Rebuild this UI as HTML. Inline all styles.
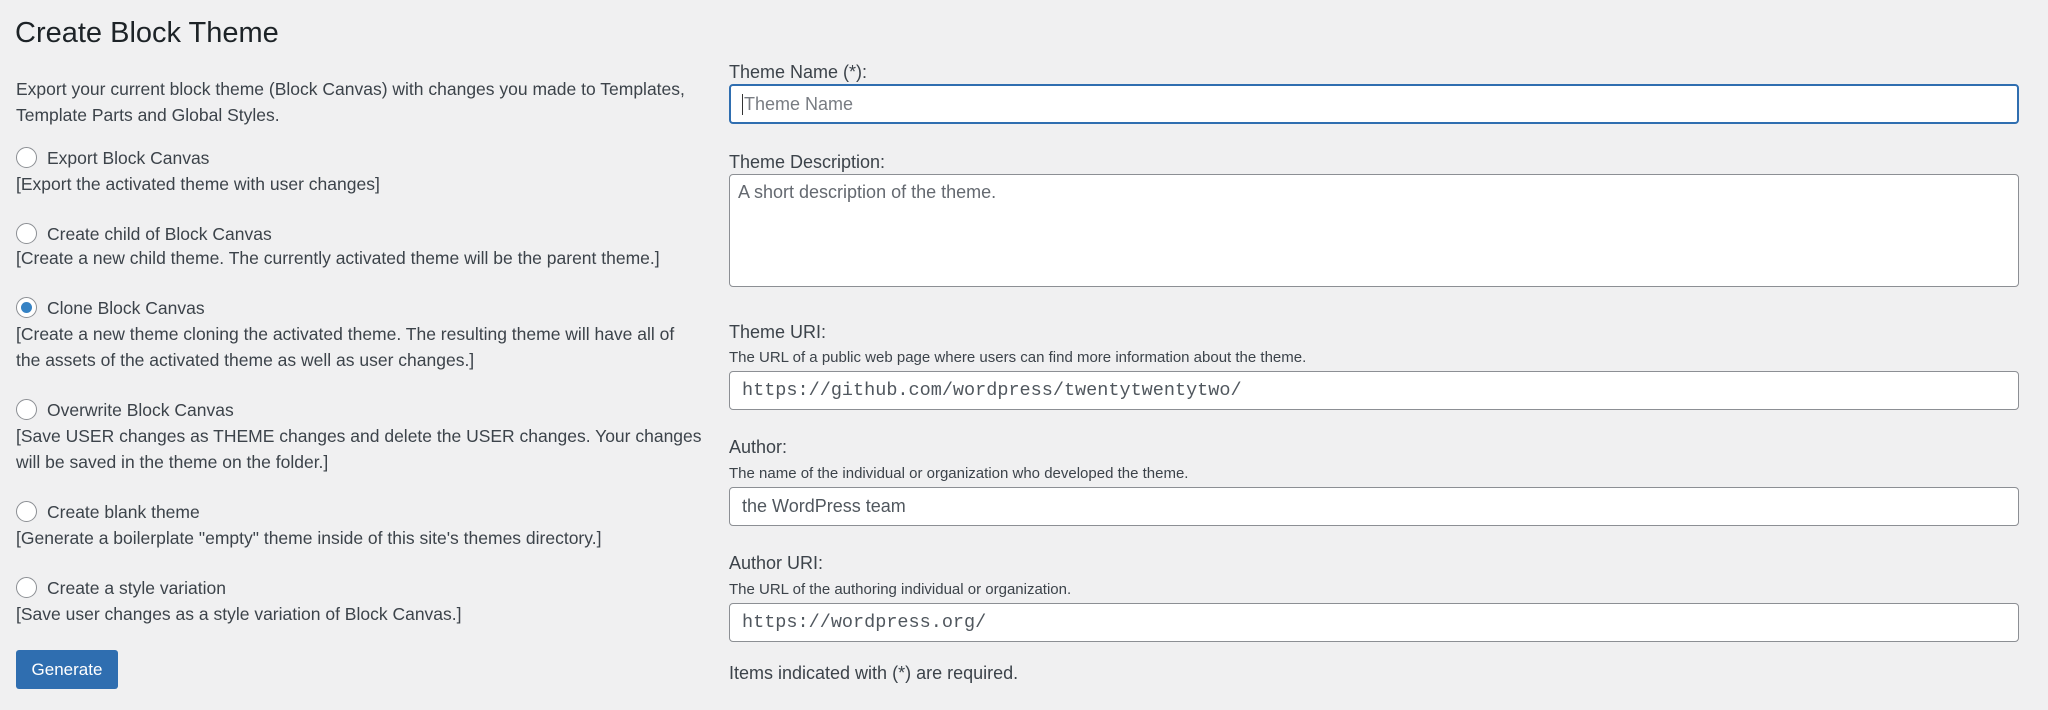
<!DOCTYPE html>
<html><head><meta charset="utf-8"><style>
*{box-sizing:border-box;margin:0;padding:0}
body{width:2048px;height:710px;background:#f0f0f1;font-family:"Liberation Sans",sans-serif;color:#3c434a;position:relative;overflow:hidden;font-size:18px}
.a{position:absolute;white-space:nowrap;line-height:20px}
.l{font-size:17.5px}
h1{position:absolute;left:15px;top:14px;font-size:29px;font-weight:400;color:#1d2327;line-height:38px}
.r{position:absolute;left:16px;width:21px;height:21px;border:1px solid #8c8f94;border-radius:50%;background:#fff}
.r.on::after{content:"";position:absolute;left:4px;top:4px;width:11px;height:11px;border-radius:50%;background:#3582c4}
.in{position:absolute;left:729px;width:1290px;background:#fff;border:1px solid #8c8f94;border-radius:4px;padding:0 12px;font-size:18px;color:#50575e;display:flex;align-items:center}
.mono{font-family:"Liberation Mono",monospace;font-size:18.5px}
.h{font-size:15px}
.btn{position:absolute;left:16px;top:650px;width:102px;height:39px;background:#2f6eb0;border-radius:3px;color:#fff;font-size:17px;display:flex;align-items:center;justify-content:center}
</style></head><body>
<h1>Create Block Theme</h1>
<div class="a l" style="left:16px;top:79px">Export your current block theme (Block Canvas) with changes you made to Templates,</div>
<div class="a l" style="left:16px;top:105px">Template Parts and Global Styles.</div>

<div class="r" style="top:147px"></div><div class="a l" style="left:47px;top:148px">Export Block Canvas</div>
<div class="a l" style="left:16px;top:174px">[Export the activated theme with user changes]</div>

<div class="r" style="top:223px"></div><div class="a l" style="left:47px;top:224px">Create child of Block Canvas</div>
<div class="a l" style="left:16px;top:248px">[Create a new child theme. The currently activated theme will be the parent theme.]</div>

<div class="r on" style="top:297px"></div><div class="a l" style="left:47px;top:298px">Clone Block Canvas</div>
<div class="a l" style="left:16px;top:324px">[Create a new theme cloning the activated theme. The resulting theme will have all of</div>
<div class="a l" style="left:16px;top:350px">the assets of the activated theme as well as user changes.]</div>

<div class="r" style="top:399px"></div><div class="a l" style="left:47px;top:400px">Overwrite Block Canvas</div>
<div class="a l" style="left:16px;top:426px">[Save USER changes as THEME changes and delete the USER changes. Your changes</div>
<div class="a l" style="left:16px;top:452px">will be saved in the theme on the folder.]</div>

<div class="r" style="top:501px"></div><div class="a l" style="left:47px;top:502px">Create blank theme</div>
<div class="a l" style="left:16px;top:528px">[Generate a boilerplate "empty" theme inside of this site's themes directory.]</div>

<div class="r" style="top:577px"></div><div class="a l" style="left:47px;top:578px">Create a style variation</div>
<div class="a l" style="left:16px;top:604px">[Save user changes as a style variation of Block Canvas.]</div>

<div class="btn">Generate</div>

<div class="a" style="left:729px;top:62px">Theme Name (*):</div>
<div class="in" style="top:84px;height:40px;border:2px solid #2f6eb0;padding-left:11px;color:#787c82"><span style="border-left:1px solid #333;padding-left:1px">Theme Name</span></div>

<div class="a" style="left:729px;top:152px">Theme Description:</div>
<div class="in" style="top:174px;height:113px;align-items:flex-start;padding:7px 8px;color:#646970">A short description of the theme.</div>

<div class="a" style="left:729px;top:322px">Theme URI:</div>
<div class="a h" style="left:729px;top:348px">The URL of a public web page where users can find more information about the theme.</div>
<div class="in mono" style="top:371px;height:39px">https://github.com/wordpress/twentytwentytwo/</div>

<div class="a" style="left:729px;top:437px">Author:</div>
<div class="a h" style="left:729px;top:464px">The name of the individual or organization who developed the theme.</div>
<div class="in" style="top:487px;height:39px">the WordPress team</div>

<div class="a" style="left:729px;top:553px">Author URI:</div>
<div class="a h" style="left:729px;top:580px">The URL of the authoring individual or organization.</div>
<div class="in mono" style="top:603px;height:39px">https://wordpress.org/</div>

<div class="a" style="left:729px;top:663px">Items indicated with (*) are required.</div>
</body></html>
